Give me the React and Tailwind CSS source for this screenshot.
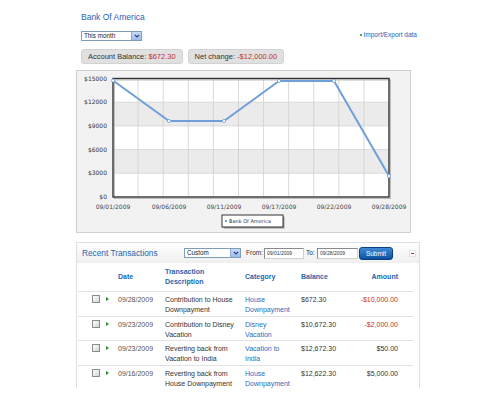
import React from "react";

const font = { fontFamily: '"Liberation Sans", Arial, sans-serif' };

function Chart() {
  const L = 36, R = 312, T = 7.5, B = 126;
  const rowH = (B - T) / 5;
  const colW = (R - L) / 11;
  const pts = [
    [36, 9.5],
    [92, 50],
    [147, 50],
    [202, 10],
    [257, 10],
    [312, 105],
  ];
  const ylabels = ["$15000", "$12000", "$9000", "$6000", "$3000", "$0"];
  const xlabels = ["09/01/2009", "09/06/2009", "09/11/2009", "09/17/2009", "09/22/2009", "09/28/2009"];
  const lf = { fontFamily: '"DejaVu Sans", sans-serif' };
  return (
    <svg width="333" height="161" viewBox="0 0 333 161">
      {[0, 1, 2, 3, 4].map((i) => (
        <rect key={i} x={L} y={T + i * rowH} width={R - L} height={rowH} fill={i % 2 === 1 ? "#ebebeb" : "#ffffff"} />
      ))}
      {[1, 2, 3, 4].map((i) => (
        <line key={"h" + i} x1={L} x2={R} y1={T + i * rowH} y2={T + i * rowH} stroke="#d4d4d4" strokeWidth="0.8" />
      ))}
      {Array.from({ length: 10 }, (_, i) => i + 1).map((i) => (
        <line key={"v" + i} x1={L + i * colW} x2={L + i * colW} y1={T} y2={B} stroke="#cfcfcf" strokeWidth="0.8" />
      ))}
      <rect x={L + 1.5} y={T + 1.5} width={R - L} height={B - T} fill="none" stroke="#bdbdbd" strokeWidth="1" />
      <rect x={L} y={T} width={R - L} height={B - T} fill="none" stroke="#333" strokeWidth="1.4" />
      <polyline points={pts.map((p) => p.join(",")).join(" ")} fill="none" stroke="#6f9fd8" strokeWidth="2" strokeLinejoin="round" />
      {pts.map((p, i) => (
        <circle key={i} cx={p[0]} cy={p[1]} r="1.6" fill="#ffffff" stroke="#6f9fd8" strokeWidth="0.8" />
      ))}
      {ylabels.map((t, i) => (
        <text key={t} x="30" y={T + i * rowH + 2} textAnchor="end" fontSize="6" fill="#333" style={lf}>
          {t}
        </text>
      ))}
      {xlabels.map((t, i) => (
        <text key={t} x={pts[i][0]} y="138" textAnchor="middle" fontSize="6" fill="#444" style={lf}>
          {t}
        </text>
      ))}
      <rect x="146.5" y="145.5" width="61" height="12" fill="#9a9a9a" />
      <rect x="145" y="144" width="61" height="12" fill="#ffffff" stroke="#333" strokeWidth="1" />
      <rect x="148" y="149" width="2" height="2" fill="#6f9fd8" />
      <text x="152" y="152" fontSize="5" fill="#333" style={lf}>
        Bank Of America
      </text>
    </svg>
  );
}

function Arrow() {
  return (
    <div className="w-[10px] h-full bg-gradient-to-b from-[#c9dbf7] to-[#9dbbea] border-l border-[#8fa9d6] flex items-center justify-center">
      <svg width="6" height="4" viewBox="0 0 6 4">
        <path d="M0.8 0.8 L3 3 L5.2 0.8" fill="none" stroke="#1f3f88" strokeWidth="1.2" />
      </svg>
    </div>
  );
}

const rows = [
  ["09/28/2009", ["Contribution to House", "Downpayment"], ["House", "Downpayment"], "$672.30", "-$10,000.00", true],
  ["09/23/2009", ["Contribution to Disney", "Vacation"], ["Disney", "Vacation"], "$10,672.30", "-$2,000.00", true],
  ["09/23/2009", ["Reverting back from", "Vacation to India"], ["Vacation to", "India"], "$12,672.30", "$50.00", false],
  ["09/16/2009", ["Reverting back from", "House Downpayment"], ["House", "Downpayment"], "$12,622.30", "$5,000.00", false],
];

export default function App() {
  return (
    <div className="w-[500px] h-[400px] bg-white pl-[76px] pt-[12px] overflow-hidden" style={font}>
      <div className="w-[344px]">
        <div className="flex justify-between">
          <div className="pl-[5px] flex flex-col">
            <div className="text-[8.5px] leading-[11px] h-[11px] text-[#1f62b5]">Bank Of America</div>
            <div className="mt-[8px] w-[61px] h-[10px] border border-[#7f9db9] bg-white flex items-stretch">
              <div className="flex-1 text-[6.3px] leading-[8px] pl-[2px] text-[#222]">This month</div>
              <Arrow />
            </div>
            <div className="mt-[8px] flex gap-[5px]">
              <div className="h-[15px] rounded-[3px] bg-[#e0e0e0] border border-[#d2d2d2] px-[6px] text-[7.5px] leading-[13px] text-[#333] whitespace-nowrap">
                Account Balance: <span className="text-[#c0302a]">$672.30</span>
              </div>
              <div className="h-[15px] rounded-[3px] bg-[#e0e0e0] border border-[#d2d2d2] px-[6px] text-[7.5px] leading-[13px] text-[#333] whitespace-nowrap">
                Net change: <span className="text-[#c0302a]">-$12,000.00</span>
              </div>
            </div>
          </div>
          <div className="mt-[19px] pr-[3px] flex items-center gap-[2px] text-[6.5px] leading-[8px] text-[#1f62b5] self-start">
            <span className="w-[2px] h-[2px] bg-[#4caf50] inline-block" />
            <span>Import/Export data</span>
          </div>
        </div>

        <div className="mt-[6px] w-[335px] h-[163px] border border-[#cfcfcf] bg-[#f2f2f2]">
          <Chart />
        </div>

        <div className="mt-[9px] w-[344px] h-[146px] border border-[#dedede] border-b-0 bg-white">
          <div className="h-[20px] bg-gradient-to-b from-white to-[#efefef] flex items-center pl-[5px]">
            <div className="w-[102px] text-[8.3px] text-[#2466b0] whitespace-nowrap">Recent Transactions</div>
            <div className="w-[57px] h-[10px] border border-[#7f9db9] bg-white flex items-stretch">
              <div className="flex-1 text-[6.3px] leading-[8px] pl-[2px] text-[#222]">Custom</div>
              <Arrow />
            </div>
            <span className="ml-[5px] text-[6.5px] text-[#333] w-[17px]">From:</span>
            <div className="ml-[1px] w-[40px] h-[11px] border border-[#8a8a8a] border-r-[#cfcfcf] border-b-[#cfcfcf] bg-white text-[5px] leading-[9px] pl-[2px] text-[#333]">09/01/2009</div>
            <span className="ml-[2px] text-[6.5px] text-[#333] w-[9px]">To:</span>
            <div className="ml-[2px] w-[41px] h-[11px] border border-[#8a8a8a] border-r-[#cfcfcf] border-b-[#cfcfcf] bg-white text-[5px] leading-[9px] pl-[2px] text-[#333]">09/28/2009</div>
            <div className="ml-[1px] w-[34px] h-[13px] rounded-[3px] border border-[#0b3f7e] bg-gradient-to-b from-[#3f8ad6] to-[#0d4f9f] text-white text-[6.5px] leading-[11px] text-center">
              Submit
            </div>
            <div className="ml-[16px] w-[7px] h-[7px] bg-white border border-[#e3e3e3] flex items-center justify-center">
              <div className="w-[3px] h-[1px] bg-[#d02020]" />
            </div>
          </div>

          <div className="ml-[1px] w-[335px]">
            <div className="h-[28px] grid grid-cols-[40px_47px_80px_56px_49px_48px] items-center text-[7px] leading-[10px] font-bold text-[#2466b0]">
              <div />
              <div>Date</div>
              <div>Transaction<br />Description</div>
              <div>Category</div>
              <div>Balance</div>
              <div className="text-right">Amount</div>
            </div>
            {rows.map((r, i) => (
              <div
                key={i}
                className="h-[24.5px] border-t border-[#e2e2e2] grid grid-cols-[40px_47px_80px_56px_49px_48px] items-start pt-[3px] text-[7px] leading-[10px]"
              >
                <div className="flex items-center h-[8px] pl-[14px]">
                  <div className="w-[8px] h-[8px] border border-[#8c8c8c] bg-gradient-to-br from-white to-[#d4d4d4]" />
                  <div className="ml-[6px] w-0 h-0 border-y-[2px] border-y-transparent border-l-[3px] border-l-[#2f8f2f]" />
                </div>
                <div className="text-[#555]">{r[0]}</div>
                <div className="text-[#333]">
                  {r[1][0]}
                  <br />
                  {r[1][1]}
                </div>
                <div className="text-[#2a6ebb]">
                  {r[2][0]}
                  <br />
                  {r[2][1]}
                </div>
                <div className="text-[#333]">{r[3]}</div>
                <div className={"text-right " + (r[5] ? "text-[#c0302a]" : "text-[#333]")}>{r[4]}</div>
              </div>
            ))}
          </div>
        </div>
      </div>
    </div>
  );
}
